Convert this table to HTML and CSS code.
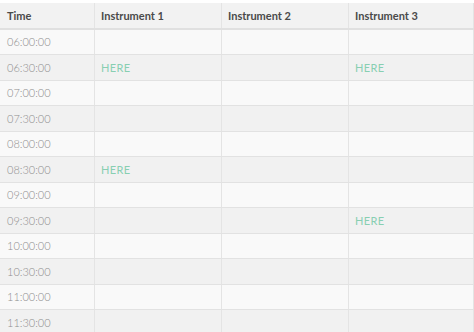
FILE: index.html
```html
<!DOCTYPE html>
<html>
<head>
<meta charset="utf-8">
<link rel="stylesheet" href="styles.css">
</head>
<body>
<div class="schedule">
  <div class="row head">
    <div class="cell">Time</div><div class="cell">Instrument 1</div><div class="cell">Instrument 2</div><div class="cell">Instrument 3</div>
  </div>
  <div class="row odd"><div class="cell time">06:00:00</div><div class="cell"></div><div class="cell"></div><div class="cell"></div></div>
  <div class="row even"><div class="cell time">06:30:00</div><div class="cell here">HERE</div><div class="cell"></div><div class="cell here">HERE</div></div>
  <div class="row odd"><div class="cell time">07:00:00</div><div class="cell"></div><div class="cell"></div><div class="cell"></div></div>
  <div class="row even"><div class="cell time">07:30:00</div><div class="cell"></div><div class="cell"></div><div class="cell"></div></div>
  <div class="row odd"><div class="cell time">08:00:00</div><div class="cell"></div><div class="cell"></div><div class="cell"></div></div>
  <div class="row even"><div class="cell time">08:30:00</div><div class="cell here">HERE</div><div class="cell"></div><div class="cell"></div></div>
  <div class="row odd"><div class="cell time">09:00:00</div><div class="cell"></div><div class="cell"></div><div class="cell"></div></div>
  <div class="row even"><div class="cell time">09:30:00</div><div class="cell"></div><div class="cell"></div><div class="cell here">HERE</div></div>
  <div class="row odd"><div class="cell time">10:00:00</div><div class="cell"></div><div class="cell"></div><div class="cell"></div></div>
  <div class="row even"><div class="cell time">10:30:00</div><div class="cell"></div><div class="cell"></div><div class="cell"></div></div>
  <div class="row odd"><div class="cell time">11:00:00</div><div class="cell"></div><div class="cell"></div><div class="cell"></div></div>
  <div class="row even"><div class="cell time">11:30:00</div><div class="cell"></div><div class="cell"></div><div class="cell"></div></div>
</div>
</body>
</html>
```

FILE: styles.css
```css
html, body {
  margin: 0;
  padding: 0;
  background: #ffffff;
}
body {
  padding-top: 3px;
  font-family: Lato, "Open Sans", sans-serif;
  font-size: 11px;
}
.schedule {
  width: 474px;
  display: flex;
  flex-direction: column;
}
.row {
  display: grid;
  grid-template-columns: 95px 127px 127px 125px;
  height: 25.5px;
  flex: none;
  box-sizing: border-box;
  border-bottom: 1px solid #e2e2e2;
}
.row.head {
  height: 26.5px;
  background: #f2f2f2;
  border-bottom: 2px solid #e0e0e0;
}
.row.odd { background: #f9f9f9; }
.row.even { background: #f1f1f1; }
.cell {
  display: flex;
  align-items: center;
  padding-left: 6px;
  border-right: 1px solid #e4e4e4;
  box-sizing: border-box;
  white-space: nowrap;
}
.cell:first-child { padding-left: 7px; }
.head .cell {
  font-weight: 700;
  color: #4a4a4a;
}
.time {
  color: #8f8f8f;
  font-weight: 300;
}
.here {
  color: #88cfb2;
  letter-spacing: 0.4px;
}
```
